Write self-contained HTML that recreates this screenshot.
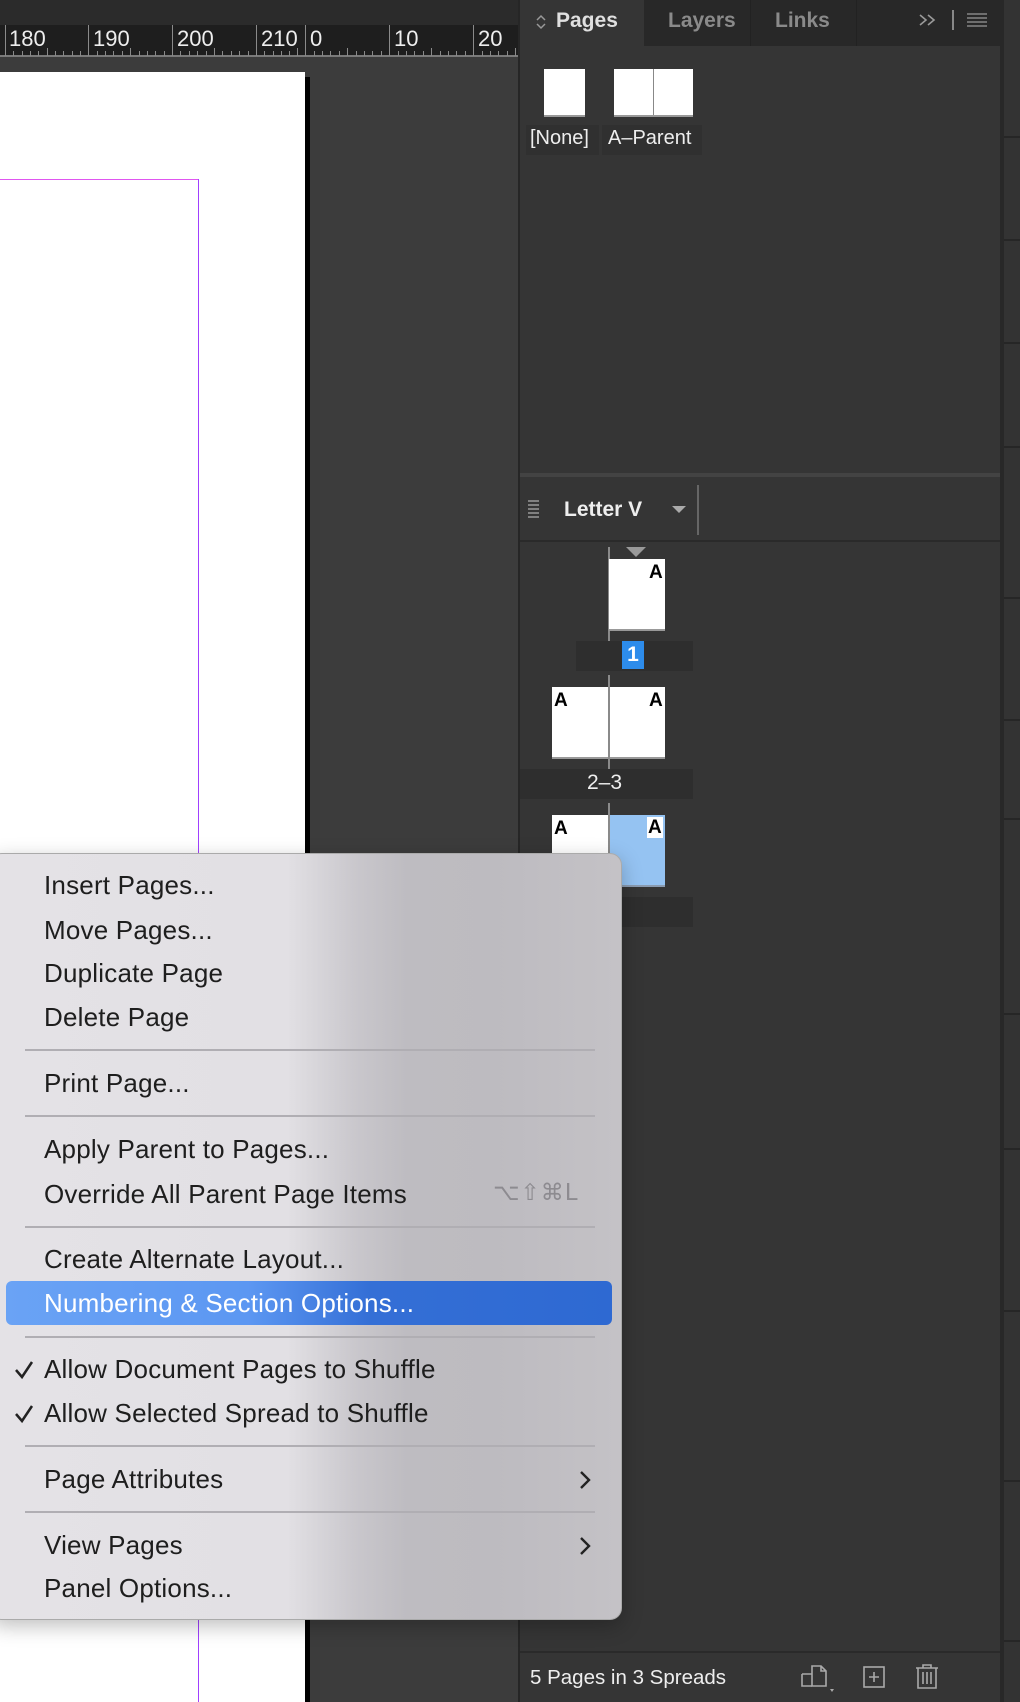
<!DOCTYPE html>
<html><head><meta charset="utf-8"><style>
*{margin:0;padding:0;box-sizing:border-box}
body{width:1020px;height:1702px;position:relative;overflow:hidden;background:#3c3c3c;font-family:"Liberation Sans",sans-serif}
.a{position:absolute}
.rl{position:absolute;top:26px;color:#eee;font-size:22px}
.mi{position:absolute;left:44px;font-size:26px;color:#1e1e1e;line-height:30px;letter-spacing:0.2px}
.sep{position:absolute;left:25px;width:570px;height:2px;background:#b0aeb3}
.pg{position:absolute;background:#fff;border-bottom:2px solid #999}
.A{position:absolute;font-size:19px;color:#000;line-height:19px;font-weight:bold}
</style></head><body>
<div class="a" style="left:0;top:0;width:520px;height:25px;background:#2b2b2b"></div>
<div class="a" style="left:0;top:25px;width:518px;height:31px;background:#1e1e1e"></div>
<div class="a" style="left:0;top:55px;width:518px;height:2px;background:#7a7a7a"></div>
<svg class="a" style="left:0;top:25px" width="518" height="31">
<g stroke="#8a8a8a" stroke-width="1">
<path d="M5.5 0V31M88.5 0V31M172.5 0V31M256.5 0V31M305.5 0V31M389.5 0V31M473.5 0V31"/>
<path d="M13.5 26V31M22.5 26V31M30.5 26V31M38.5 26V31M47.5 23V31M55.5 26V31M63.5 26V31M72.5 26V31M80.5 26V31M97.5 26V31M105.5 26V31M113.5 26V31M122.5 26V31M130.5 23V31M139.5 26V31M147.5 26V31M155.5 26V31M164.5 26V31M180.5 26V31M189.5 26V31M197.5 26V31M206.5 26V31M214.5 23V31M222.5 26V31M231.5 26V31M239.5 26V31M248.5 26V31M264.5 26V31M273.5 26V31M281.5 26V31M289.5 26V31M297.5 23V31M314.5 26V31M322.5 26V31M330.5 26V31M339.5 26V31M347.5 23V31M356.5 26V31M364.5 26V31M372.5 26V31M381.5 26V31M398.5 26V31M406.5 26V31M414.5 26V31M423.5 26V31M431.5 23V31M440.5 26V31M448.5 26V31M456.5 26V31M465.5 26V31M482.5 26V31M490.5 26V31M498.5 26V31M507.5 26V31M515.5 23V31"/></g></svg>
<div class="rl" style="left:9px">180</div><div class="rl" style="left:93px">190</div><div class="rl" style="left:177px">200</div><div class="rl" style="left:261px">210</div><div class="rl" style="left:310px">0</div><div class="rl" style="left:394px">10</div><div class="rl" style="left:478px">20</div>
<div class="a" style="left:0;top:72px;width:305px;height:1630px;background:#fff"></div>
<div class="a" style="left:305px;top:77px;width:5px;height:1625px;background:#000"></div>
<div class="a" style="left:0;top:179px;width:199px;height:1px;background:#e056f0"></div>
<div class="a" style="left:198px;top:179px;width:1px;height:1523px;background:#a040ff"></div>
<div class="a" style="left:518px;top:0;width:2px;height:1702px;background:#262626"></div>
<div class="a" style="left:520px;top:0;width:480px;height:1702px;background:#353535"></div>
<div class="a" style="left:644px;top:0;width:356px;height:46px;background:#282828"></div>
<div class="a" style="left:750px;top:0;width:1px;height:46px;background:#222"></div>
<div class="a" style="left:856px;top:0;width:1px;height:46px;background:#222"></div>
<div class="a" style="left:1000px;top:0;width:4px;height:1702px;background:#282828"></div>
<div class="a" style="left:1004px;top:0;width:16px;height:1702px;background:#333"></div>
<div class="a" style="left:1004px;top:136px;width:16px;height:2px;background:#262626"></div>
<div class="a" style="left:1004px;top:239px;width:16px;height:2px;background:#262626"></div>
<div class="a" style="left:1004px;top:342px;width:16px;height:2px;background:#262626"></div>
<div class="a" style="left:1004px;top:446px;width:16px;height:2px;background:#262626"></div>
<div class="a" style="left:1004px;top:597px;width:16px;height:2px;background:#262626"></div>
<div class="a" style="left:1004px;top:719px;width:16px;height:2px;background:#262626"></div>
<div class="a" style="left:1004px;top:818px;width:16px;height:2px;background:#262626"></div>
<div class="a" style="left:1004px;top:1013px;width:16px;height:2px;background:#262626"></div>
<div class="a" style="left:1004px;top:1148px;width:16px;height:2px;background:#262626"></div>
<div class="a" style="left:1004px;top:1310px;width:16px;height:2px;background:#262626"></div>
<div class="a" style="left:1004px;top:1480px;width:16px;height:2px;background:#262626"></div>
<div class="a" style="left:1004px;top:1640px;width:16px;height:2px;background:#262626"></div>
<svg class="a" style="left:535px;top:13px" width="12" height="18"><path d="M2 7L6 3L10 7M2 11L6 15L10 11" stroke="#999" stroke-width="1.5" fill="none"/></svg>
<div class="a" style="left:556px;top:9px;font-size:21px;font-weight:bold;color:#e0e0e0">Pages</div>
<div class="a" style="left:668px;top:9px;font-size:21px;font-weight:bold;color:#8a8a8a">Layers</div>
<div class="a" style="left:775px;top:9px;font-size:21px;font-weight:bold;color:#8a8a8a">Links</div>
<svg class="a" style="left:918px;top:13px" width="20" height="14"><path d="M2 2L8 7L2 12M10 2L16 7L10 12" stroke="#999" stroke-width="1.6" fill="none"/></svg>
<div class="a" style="left:952px;top:10px;width:2px;height:20px;background:#888"></div>
<svg class="a" style="left:967px;top:13px" width="20" height="14"><path d="M0 1H20M0 5H20M0 9H20M0 13H20" stroke="#999" stroke-width="1.3"/></svg>
<div class="pg" style="left:544px;top:69px;width:41px;height:48px"></div>
<div class="pg" style="left:614px;top:69px;width:79px;height:48px"></div>
<div class="a" style="left:653px;top:69px;width:1px;height:46px;background:#888"></div>
<div class="a" style="left:526px;top:125px;width:73px;height:30px;background:#303030"></div>
<div class="a" style="left:602px;top:125px;width:100px;height:30px;background:#303030"></div>
<div class="a" style="left:530px;top:127px;font-size:20px;color:#eee">[None]</div>
<div class="a" style="left:608px;top:127px;font-size:20px;color:#eee">A–Parent</div>
<div class="a" style="left:520px;top:473px;width:480px;height:4px;background:#434343"></div>
<div class="a" style="left:520px;top:540px;width:480px;height:2px;background:#2a2a2a"></div>
<svg class="a" style="left:528px;top:500px" width="11" height="19"><path d="M0 1H11M0 5H11M0 9H11M0 13H11M0 17H11" stroke="#999" stroke-width="1.5"/></svg>
<div class="a" style="left:564px;top:498px;font-size:21px;font-weight:bold;color:#eee">Letter V</div>
<svg class="a" style="left:672px;top:506px" width="14" height="7"><path d="M0 0H14L7 7Z" fill="#aaa"/></svg>
<div class="a" style="left:697px;top:485px;width:2px;height:50px;background:#666"></div>
<div class="a" style="left:608px;top:547px;width:2px;height:94px;background:#8a8a8a"></div>
<svg class="a" style="left:626px;top:547px" width="20" height="10"><path d="M0 0H20L10 10Z" fill="#999"/></svg>
<div class="pg" style="left:609px;top:559px;width:56px;height:72px"></div>
<div class="A" style="left:649px;top:563px">A</div>
<div class="a" style="left:576px;top:641px;width:117px;height:30px;background:#2e2e2e"></div>
<div class="a" style="left:622px;top:641px;width:22px;height:28px;background:#2d8ceb;color:#fff;font-size:21px;font-weight:bold;text-align:center;line-height:28px">1</div>
<div class="pg" style="left:552px;top:687px;width:113px;height:72px"></div>
<div class="a" style="left:608px;top:675px;width:2px;height:94px;background:#8a8a8a"></div>
<div class="A" style="left:554px;top:691px">A</div><div class="A" style="left:649px;top:691px">A</div>
<div class="a" style="left:520px;top:769px;width:173px;height:30px;background:#2e2e2e"></div>
<div class="a" style="left:587px;top:771px;font-size:21px;color:#eee">2–3</div>
<div class="pg" style="left:552px;top:815px;width:56px;height:72px"></div>
<div class="a" style="left:609px;top:815px;width:56px;height:72px;background:#95c3f2;border-bottom:2px solid #8a9bb0"></div>
<div class="a" style="left:608px;top:803px;width:2px;height:84px;background:#8a8a8a"></div>
<div class="A" style="left:554px;top:819px">A</div><div class="A" style="left:647px;top:817px;background:#fff;padding:1px">A</div>
<div class="a" style="left:520px;top:897px;width:173px;height:30px;background:#2e2e2e"></div>
<div class="a" style="left:520px;top:1651px;width:480px;height:2px;background:#2a2a2a"></div>
<div class="a" style="left:530px;top:1666px;font-size:20.5px;color:#eee">5 Pages in 3 Spreads</div>
<svg class="a" style="left:800px;top:1664px" width="40" height="30"><g stroke="#aaa" stroke-width="1.6" fill="none"><path d="M12 2H21L26 7V22H12Z M21 2V7H26"/><path d="M2 10H12M2 10V22H12"/></g><path d="M30 25H34L32 28Z" fill="#aaa"/></svg>
<svg class="a" style="left:863px;top:1666px" width="22" height="22"><g stroke="#aaa" stroke-width="1.6" fill="none"><rect x="1" y="1" width="20" height="20"/><path d="M11 6V16M6 11H16"/></g></svg>
<svg class="a" style="left:915px;top:1663px" width="24" height="27"><g stroke="#aaa" stroke-width="1.6" fill="none"><path d="M1 5H23M8 5V2H16V5M3 5V25H21V5M8 9V21M12 9V21M16 9V21"/></g></svg>
<div class="a" style="left:-10px;top:853px;width:632px;height:767px;border-radius:12px;background:linear-gradient(90deg,#e4e2e6 0%,#e2e0e4 47%,#c9c7cc 58%,#bebcc1 66%,#bdbbc0 80%,#c4c2c6 100%);box-shadow:0 6px 20px rgba(0,0,0,.25);border:1px solid #aaa"></div>
<div class="a" style="left:6px;top:1281px;width:606px;height:44px;border-radius:6px;background:linear-gradient(90deg,#6aa3f5 0%,#5c97f2 40%,#346fd6 60%,#2e69d2 100%)"></div>
<div class="mi" style="top:870px">Insert Pages...</div>
<div class="mi" style="top:915px">Move Pages...</div>
<div class="mi" style="top:958px">Duplicate Page</div>
<div class="mi" style="top:1002px">Delete Page</div>
<div class="sep" style="top:1049px"></div>
<div class="mi" style="top:1068px">Print Page...</div>
<div class="sep" style="top:1115px"></div>
<div class="mi" style="top:1134px">Apply Parent to Pages...</div>
<div class="mi" style="top:1179px">Override All Parent Page Items</div>
<div class="a" style="left:493px;top:1180px;font-size:23px;color:#8d8b90;font-family:'DejaVu Sans',sans-serif;letter-spacing:1px">⌥⇧⌘L</div>
<div class="sep" style="top:1226px"></div>
<div class="mi" style="top:1244px">Create Alternate Layout...</div>
<div class="mi" style="top:1288px;color:#fff">Numbering &amp; Section Options...</div>
<div class="sep" style="top:1336px"></div>
<div class="mi" style="top:1354px">Allow Document Pages to Shuffle</div>
<div class="mi" style="top:1398px">Allow Selected Spread to Shuffle</div>
<svg class="a" style="left:14px;top:1360px" width="20" height="20"><path d="M2 10L8 17L18 2" stroke="#222" stroke-width="2.5" fill="none"/></svg>
<svg class="a" style="left:14px;top:1404px" width="20" height="20"><path d="M2 10L8 17L18 2" stroke="#222" stroke-width="2.5" fill="none"/></svg>
<div class="sep" style="top:1445px"></div>
<div class="mi" style="top:1464px">Page Attributes</div>
<svg class="a" style="left:579px;top:1470px" width="12" height="20"><path d="M2 2L10 10L2 18" stroke="#222" stroke-width="2.4" fill="none"/></svg>
<div class="sep" style="top:1511px"></div>
<div class="mi" style="top:1530px">View Pages</div>
<svg class="a" style="left:579px;top:1536px" width="12" height="20"><path d="M2 2L10 10L2 18" stroke="#222" stroke-width="2.4" fill="none"/></svg>
<div class="mi" style="top:1573px">Panel Options...</div>
</body></html>
